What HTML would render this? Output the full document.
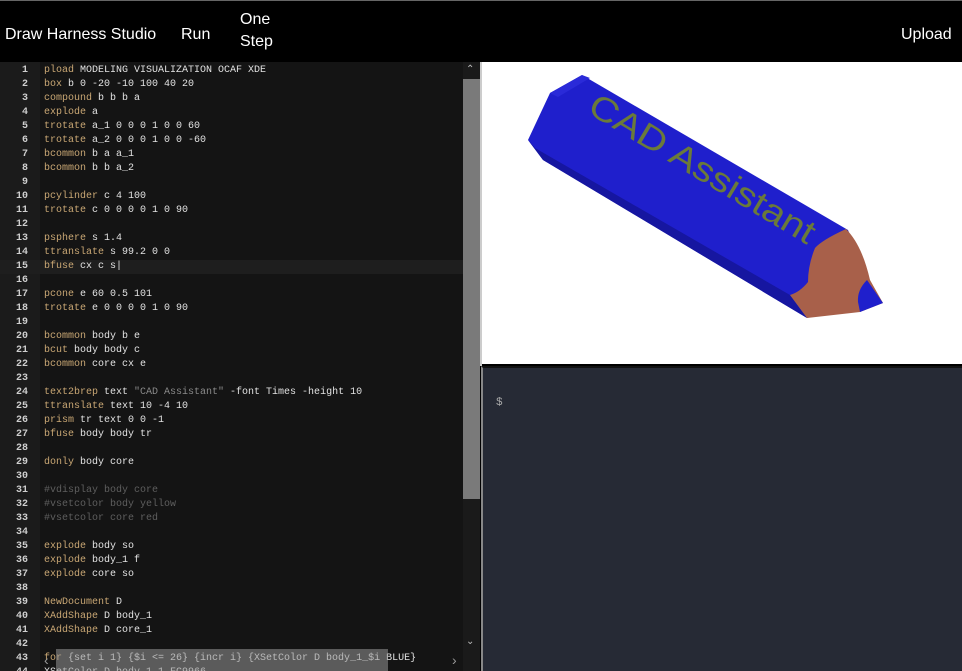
<!DOCTYPE html>
<html><head><meta charset="utf-8"><style>
*{margin:0;padding:0;box-sizing:border-box}
body{width:962px;height:671px;overflow:hidden;background:#000;font-family:"Liberation Sans",sans-serif;position:relative}
.hdr{position:absolute;left:0;top:0;width:962px;height:62px;background:#000;border-top:1px solid #666;color:#fff;font-size:16px}
.hdr span{position:absolute}
.ed{position:absolute;left:0;top:62px;width:480px;height:609px;background:#141414;overflow:hidden}
.gut{position:absolute;left:0;top:0;width:40px;height:609px;background:#1b1b1b}
.ln{position:absolute;left:0;width:480px;height:14px;font:10px/14px "Liberation Mono",monospace;color:#e2e2e2;white-space:pre}
.ln b{position:absolute;left:0;width:28px;text-align:right;font-weight:bold;color:#cfcfcf}
.ln i{font-style:normal;position:absolute;left:44px}
.k{color:#c9a774}.s{color:#8a8a8a}.c{color:#5e5e5e;font-style:italic}
.sb{position:absolute;left:463px;top:0;width:17px;height:609px;background:#1a1a1a}
.th{position:absolute;left:463px;top:17px;width:17px;height:420px;background:#7a7a7a}
.hs{position:absolute;left:56px;top:587px;width:332px;height:22px;background:rgba(150,150,150,.55)}
.vw{position:absolute;left:482px;top:62px;width:480px;height:302px;background:#fff}
.tm{position:absolute;left:481px;top:366px;width:481px;height:305px;background:#262a35;border-left:2px solid #888;border-top:2px solid #111}
</style></head><body>
<div class="hdr"><span style="left:5px;top:25px">Draw Harness Studio</span><span style="left:181px;top:25px">Run</span><span style="left:240px;top:10px">One</span><span style="left:240px;top:32px">Step</span><span style="left:901px;top:25px">Upload</span></div>
<div class="ed"><div class="gut"></div>
<div class="ln" style="top:198px;background:#1e1e1e"></div>
<div style="position:absolute;left:0;top:2px;width:480px;height:609px">
<div class="ln" style="top:0"><b>1</b><i><span class="k">pload</span> MODELING VISUALIZATION OCAF XDE</i></div>
<div class="ln" style="top:14px"><b>2</b><i><span class="k">box</span> b 0 -20 -10 100 40 20</i></div>
<div class="ln" style="top:28px"><b>3</b><i><span class="k">compound</span> b b b a</i></div>
<div class="ln" style="top:42px"><b>4</b><i><span class="k">explode</span> a</i></div>
<div class="ln" style="top:56px"><b>5</b><i><span class="k">trotate</span> a_1 0 0 0 1 0 0 60</i></div>
<div class="ln" style="top:70px"><b>6</b><i><span class="k">trotate</span> a_2 0 0 0 1 0 0 -60</i></div>
<div class="ln" style="top:84px"><b>7</b><i><span class="k">bcommon</span> b a a_1</i></div>
<div class="ln" style="top:98px"><b>8</b><i><span class="k">bcommon</span> b b a_2</i></div>
<div class="ln" style="top:112px"><b>9</b></div>
<div class="ln" style="top:126px"><b>10</b><i><span class="k">pcylinder</span> c 4 100</i></div>
<div class="ln" style="top:140px"><b>11</b><i><span class="k">trotate</span> c 0 0 0 0 1 0 90</i></div>
<div class="ln" style="top:154px"><b>12</b></div>
<div class="ln" style="top:168px"><b>13</b><i><span class="k">psphere</span> s 1.4</i></div>
<div class="ln" style="top:182px"><b>14</b><i><span class="k">ttranslate</span> s 99.2 0 0</i></div>
<div class="ln" style="top:196px"><b>15</b><i><span class="k">bfuse</span> cx c s|</i></div>
<div class="ln" style="top:210px"><b>16</b></div>
<div class="ln" style="top:224px"><b>17</b><i><span class="k">pcone</span> e 60 0.5 101</i></div>
<div class="ln" style="top:238px"><b>18</b><i><span class="k">trotate</span> e 0 0 0 0 1 0 90</i></div>
<div class="ln" style="top:252px"><b>19</b></div>
<div class="ln" style="top:266px"><b>20</b><i><span class="k">bcommon</span> body b e</i></div>
<div class="ln" style="top:280px"><b>21</b><i><span class="k">bcut</span> body body c</i></div>
<div class="ln" style="top:294px"><b>22</b><i><span class="k">bcommon</span> core cx e</i></div>
<div class="ln" style="top:308px"><b>23</b></div>
<div class="ln" style="top:322px"><b>24</b><i><span class="k">text2brep</span> text <span class="s">"CAD Assistant"</span> -font Times -height 10</i></div>
<div class="ln" style="top:336px"><b>25</b><i><span class="k">ttranslate</span> text 10 -4 10</i></div>
<div class="ln" style="top:350px"><b>26</b><i><span class="k">prism</span> tr text 0 0 -1</i></div>
<div class="ln" style="top:364px"><b>27</b><i><span class="k">bfuse</span> body body tr</i></div>
<div class="ln" style="top:378px"><b>28</b></div>
<div class="ln" style="top:392px"><b>29</b><i><span class="k">donly</span> body core</i></div>
<div class="ln" style="top:406px"><b>30</b></div>
<div class="ln" style="top:420px"><b>31</b><i class="c">#vdisplay body core</i></div>
<div class="ln" style="top:434px"><b>32</b><i class="c">#vsetcolor body yellow</i></div>
<div class="ln" style="top:448px"><b>33</b><i class="c">#vsetcolor core red</i></div>
<div class="ln" style="top:462px"><b>34</b></div>
<div class="ln" style="top:476px"><b>35</b><i><span class="k">explode</span> body so</i></div>
<div class="ln" style="top:490px"><b>36</b><i><span class="k">explode</span> body_1 f</i></div>
<div class="ln" style="top:504px"><b>37</b><i><span class="k">explode</span> core so</i></div>
<div class="ln" style="top:518px"><b>38</b></div>
<div class="ln" style="top:532px"><b>39</b><i><span class="k">NewDocument</span> D</i></div>
<div class="ln" style="top:546px"><b>40</b><i><span class="k">XAddShape</span> D body_1</i></div>
<div class="ln" style="top:560px"><b>41</b><i><span class="k">XAddShape</span> D core_1</i></div>
<div class="ln" style="top:574px"><b>42</b></div>
<div class="ln" style="top:588px"><b>43</b><i><span class="k">for</span> {set i 1} {$i &lt;= 26} {incr i} {XSetColor D body_1_$i BLUE}</i></div>
<div class="ln" style="top:602px"><b>44</b><i>XSetColor D body_1_1 FC9966</i></div>
</div>
<div class="hs"></div>
<div class="sb"></div><div class="th"></div>
<div style="position:absolute;left:466px;top:2px;color:#bbb;font-size:10px">&#8963;</div>
<div style="position:absolute;left:466px;top:574px;color:#bbb;font-size:10px">&#8964;</div>
<div style="position:absolute;left:44px;top:590px;color:#999;font-size:14px">&#8249;</div>
<div style="position:absolute;left:452px;top:590px;color:#999;font-size:14px">&#8250;</div>
</div>
<div style="position:absolute;left:480px;top:62px;width:2px;height:304px;background:#ccc"></div>
<div class="vw">
<svg width="480" height="302" viewBox="482 62 480 302">
<polygon points="528,140 550,93 582,75 848,230 860,260 870,300 807,318 543,160" fill="#1f1fcc"/>
<polygon points="528,140 543,160 807,318 790,295 535,148" fill="#1616a0"/>
<polygon points="550,93 582,75 590,78 558,97" fill="#2a2ad8"/>
<path d="M846,229 Q822,240 815,248 Q808,265 808,282 Q800,292 790,295 L807,318 L860,312 L883,303 L870,280 Q862,245 846,229 Z" fill="#a8604a"/>
<path d="M867,280 Q857,290 858,302 L860,312 L883,303 Z" fill="#1f1fcc"/>
<text x="0" y="0" transform="translate(586,112) rotate(31)" font-family="Liberation Sans,sans-serif" font-size="34" textLength="258" lengthAdjust="spacingAndGlyphs" fill="#6b7a3a">CAD Assistant</text>
</svg></div>
<div class="tm"><span style="position:absolute;left:13px;top:29px;color:#aaa;font:11px 'Liberation Mono',monospace">$</span></div>
</body></html>
